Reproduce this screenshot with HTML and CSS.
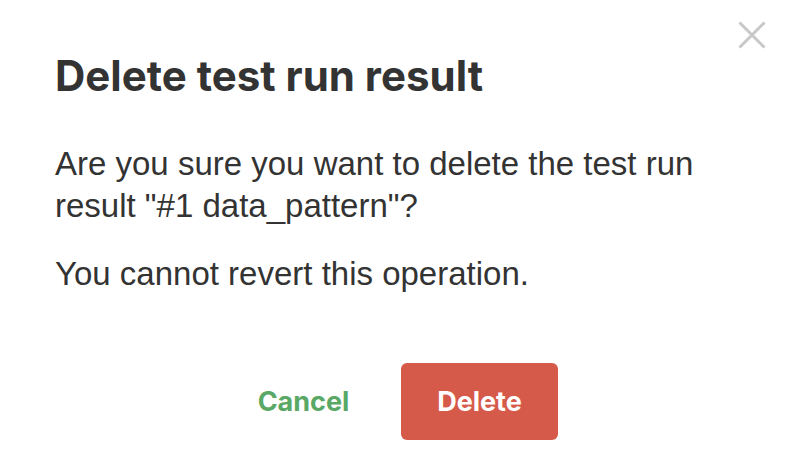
FILE: index.html
```html
<!DOCTYPE html>
<html lang="en">
<head>
    <meta charset="UTF-8">
    <meta name="viewport" content="width=device-width, initial-scale=1.0">
    <title>Delete test run result</title>
    <link rel="stylesheet" href="styles.css">
</head>
<body>
    <div class="modal">
        <button class="close" aria-label="Close">
            <svg width="28" height="28" viewBox="0 0 28 28">
                <path d="M1.5 1.5 L26.5 26.5 M26.5 1.5 L1.5 26.5" stroke="#c8c8c8" stroke-width="3" fill="none"/>
            </svg>
        </button>

        <h1>Delete test run result</h1>

        <div class="body">
            <p>Are you sure you want to delete the test run result "#1 data_pattern"?</p>
            <p>You cannot revert this operation.</p>
        </div>

        <div class="actions">
            <button class="btn btn-cancel">Cancel</button>
            <button class="btn btn-delete">Delete</button>
        </div>
    </div>
</body>
</html>
```

FILE: styles.css
```css
body {
    margin: 0;
    background: white;
    font-family: "Liberation Sans", Arial, sans-serif;
    color: #333;
}
.modal {
    position: relative;
    padding: 51px 55px 25px 55px;
}
.close {
    position: absolute;
    top: 21px;
    right: 20px;
    background: none;
    border: none;
    padding: 0;
    cursor: pointer;
}
.close svg {
    display: block;
}
h1 {
    font-family: Inter, sans-serif;
    font-weight: 700;
    font-size: 42px;
    line-height: 50px;
    margin: 0 0 42px 0;
    color: #333;
}
.body p {
    font-size: 33px;
    line-height: 42px;
    margin: 0 0 26px 0;
}
.body p:last-child {
    margin-bottom: 0;
}
.actions {
    display: flex;
    justify-content: center;
    align-items: center;
    gap: 19px;
    margin-top: 68px;
    padding-right: 3px;
}
.btn {
    font-family: Inter, sans-serif;
    font-weight: 700;
    font-size: 27px;
    width: 157px;
    height: 77px;
    border: none;
    border-radius: 6px;
    cursor: pointer;
}
.btn-cancel {
    background: none;
    color: #5aa865;
}
.btn-delete {
    background-color: #d65a4a;
    color: white;
}
```
